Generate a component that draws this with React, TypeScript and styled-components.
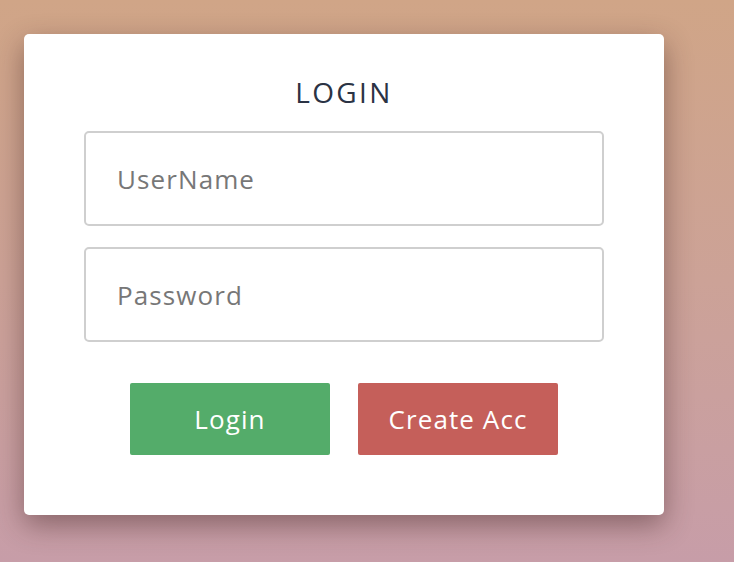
import React from "react";
import styled, { createGlobalStyle } from "styled-components";

const GlobalStyle = createGlobalStyle`
  html, body {
    margin: 0;
    padding: 0;
    height: 100%;
  }
  body {
    font-family: "Open Sans", "Noto Sans", sans-serif;
    background: linear-gradient(180deg, #d0a587 0%, #cca297 50%, #c79da8 100%);
    min-height: 562px;
  }
  #root {
    min-height: 562px;
  }
`;

const Page = styled.div`
  padding: 34px 0 0 24px;
`;

const Card = styled.form`
  width: 640px;
  height: 481px;
  box-sizing: border-box;
  background: #ffffff;
  border-radius: 5px;
  box-shadow: 0 10px 28px rgba(60, 30, 30, 0.45);
  padding: 40px 60px 60px;
  display: flex;
  flex-direction: column;
  align-items: stretch;
`;

const Title = styled.h2`
  margin: 0 0 21px;
  font-weight: 400;
  font-size: 28px;
  line-height: 36px;
  letter-spacing: 2.4px;
  text-align: center;
  color: #2b3344;
`;

const Input = styled.input`
  height: 95px;
  box-sizing: border-box;
  border: 2px solid #cfcfcf;
  border-radius: 5px;
  padding: 0 31px;
  margin-bottom: 21px;
  font-family: inherit;
  font-size: 26px;
  letter-spacing: 1.1px;
  color: #333;
  outline: none;

  &::placeholder {
    color: #777777;
  }
`;

const Actions = styled.div`
  margin-top: 20px;
  display: flex;
  justify-content: center;
  gap: 28px;
`;

interface ButtonProps {
  $tone: "green" | "red";
}

const Button = styled.button<ButtonProps>`
  width: 200px;
  height: 72px;
  border: none;
  border-radius: 2px;
  background: ${(p) => (p.$tone === "green" ? "#54ac6a" : "#c55f5a")};
  color: #ffffff;
  font-family: inherit;
  font-size: 26px;
  letter-spacing: 1.1px;
  cursor: pointer;
`;

export default function App() {
  return (
    <>
      <GlobalStyle />
      <Page>
        <Card onSubmit={(e) => e.preventDefault()}>
          <Title>LOGIN</Title>
          <Input type="text" placeholder="UserName" />
          <Input type="password" placeholder="Password" />
          <Actions>
            <Button type="submit" $tone="green">
              Login
            </Button>
            <Button type="button" $tone="red">
              Create Acc
            </Button>
          </Actions>
        </Card>
      </Page>
    </>
  );
}
